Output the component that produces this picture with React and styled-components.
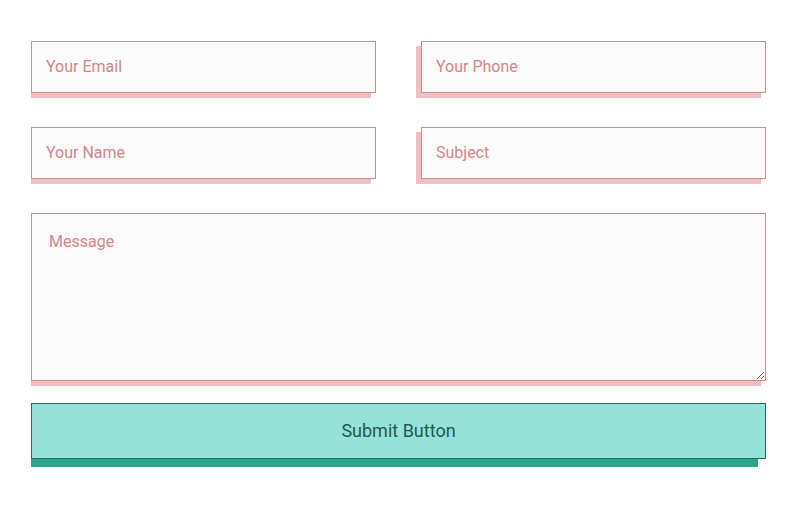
import React from "react";
import styled, { createGlobalStyle } from "styled-components";

const Global = createGlobalStyle`
  html, body { margin: 0; padding: 0; background: #ffffff; }
  body { font-family: Roboto, "Noto Sans", sans-serif; }
`;

const Page = styled.div`
  padding: 41px 34px 40px 31px;
`;

const Form = styled.form`
  width: 735px;
  overflow: hidden;
  padding-bottom: 10px;
  display: flex;
  flex-direction: column;
`;

const Grid = styled.div`
  display: grid;
  grid-template-columns: 345px 345px;
  column-gap: 45px;
  row-gap: 34px;
  margin-bottom: 34px;
`;

const fieldBase = `
  box-sizing: border-box;
  width: 100%;
  background: #fafafa;
  border: 1px solid #d2898e;
  box-shadow: -5px 5px 0 #efbfc1;
  font-family: Roboto, "Noto Sans", sans-serif;
  font-size: 16px;
  color: #c86e73;
  outline: none;
  border-radius: 0;
  &::placeholder { color: #d4868b; opacity: 1; }
`;

const Input = styled.input`
  ${fieldBase}
  height: 52px;
  padding: 0 14px 2px;
`;

const Message = styled.textarea`
  ${fieldBase}
  display: block;
  height: 168px;
  padding: 18px 17px;
  resize: vertical;
`;

const Submit = styled.button`
  box-sizing: border-box;
  margin-top: 22px;
  width: 100%;
  height: 56px;
  padding-bottom: 2px;
  background: #95e2d8;
  border: 1px solid #276b5f;
  box-shadow: -8px 8px 0 #2aa78a;
  color: #1f5a4f;
  font-family: Roboto, "Noto Sans", sans-serif;
  font-size: 18px;
  cursor: pointer;
`;

export default function App() {
  return (
    <>
      <Global />
      <Page>
        <Form onSubmit={(e) => e.preventDefault()}>
          <Grid>
            <Input type="email" placeholder="Your Email" />
            <Input type="tel" placeholder="Your Phone" />
            <Input type="text" placeholder="Your Name" />
            <Input type="text" placeholder="Subject" />
          </Grid>
          <Message placeholder="Message" />
          <Submit type="submit">Submit Button</Submit>
        </Form>
      </Page>
    </>
  );
}
